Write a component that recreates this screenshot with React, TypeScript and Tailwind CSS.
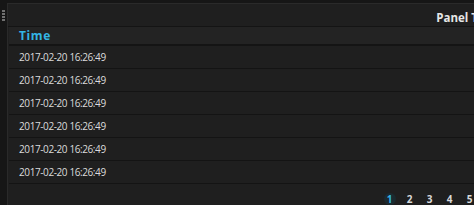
const rows = Array.from({ length: 7 }, () => '2017-02-20 16:26:49')
const pages = [1, 2, 3, 4, 5, 6, 7, 8, 9]

export default function App() {
  return (
    <div className="h-[205px] w-[474px] overflow-hidden bg-[#161616] font-['Open_Sans',sans-serif]">
      <div className="flex h-full">
        {/* drag handle */}
        <div className="flex w-[7px] shrink-0 flex-col items-center pt-[10px]">
          <div className="flex flex-col gap-[1px]">
            {[0, 1, 2, 3].map((i) => (
              <div key={i} className="h-[2px] w-[3px] bg-[#707070]" />
            ))}
          </div>
        </div>

        {/* panel */}
        <div className="mt-[3px] flex w-[916px] shrink-0 flex-col border-l border-t border-[#2a2a2a] bg-[#1f1f1f]">
          <div className="flex h-[23px] shrink-0 items-start justify-center border-b border-[#141414] pl-[2px] pt-[6px]">
            <span className="text-[11.5px] leading-[16px] font-bold text-[#e6e6e6]">Panel Title</span>
          </div>

          <div className="mx-[1px] flex h-[162px] shrink-0 flex-col overflow-hidden">
            <div className="flex h-[19px] shrink-0 items-center border-b-[2px] border-[#141414] bg-[#232323] px-[10px]">
              <span className="text-[12px] font-bold tracking-[0.6px] text-[#33b5e5]">Time</span>
            </div>
            {rows.map((r, i) => (
              <div
                key={i}
                className="flex h-[23px] shrink-0 items-center border-b border-[#141414] px-[10px]"
              >
                <span className="text-[10px] tracking-[-0.4px] text-[#dcdcdc]">{r}</span>
              </div>
            ))}
          </div>

          <div className="flex justify-center pl-[8px] pt-[3px]">
            {pages.map((p) => (
              <span key={p} className="flex h-[14px] w-[20px] items-center justify-center">
                {p === 1 ? (
                  <span className="flex h-[12px] w-[12px] items-center justify-center rounded-full bg-[#1b2a30] text-[10px] font-bold text-[#33b5e5]">
                    {p}
                  </span>
                ) : (
                  <span className="text-[10px] font-bold text-[#d8d9da]">{p}</span>
                )}
              </span>
            ))}
          </div>
        </div>
      </div>
    </div>
  )
}
